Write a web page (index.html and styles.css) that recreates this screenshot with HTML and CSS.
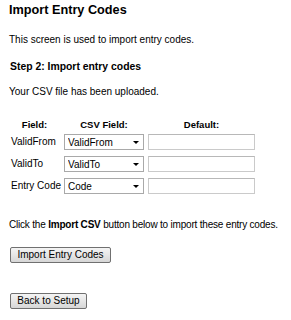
FILE: index.html
```html
<!DOCTYPE html>
<html lang="en">
<head>
    <meta charset="UTF-8">
    <meta name="viewport" content="width=device-width, initial-scale=1.0">
    <title>Import Entry Codes</title>
    <link rel="stylesheet" href="styles.css">
</head>
<body>
    <div class="page">
        <h1 class="title">Import Entry Codes</h1>
        <p class="intro">This screen is used to import entry codes.</p>

        <h2 class="step">Step 2: Import entry codes</h2>
        <p class="uploaded">Your CSV file has been uploaded.</p>

        <div class="mapping">
            <div class="head">Field:</div>
            <div class="head">CSV Field:</div>
            <div class="head">Default:</div>

            <div class="label">ValidFrom</div>
            <div class="select-wrap">
                <select>
                    <option>ValidFrom</option>
                    <option>ValidTo</option>
                    <option>Code</option>
                </select>
            </div>
            <input type="text" class="default">

            <div class="label">ValidTo</div>
            <div class="select-wrap">
                <select>
                    <option>ValidTo</option>
                    <option>ValidFrom</option>
                    <option>Code</option>
                </select>
            </div>
            <input type="text" class="default">

            <div class="label">Entry Code</div>
            <div class="select-wrap">
                <select>
                    <option>Code</option>
                    <option>ValidFrom</option>
                    <option>ValidTo</option>
                </select>
            </div>
            <input type="text" class="default">
        </div>

        <p class="hint">Click the <b>Import CSV</b> button below to import these entry codes.</p>

        <button type="button" class="btn btn-import">Import Entry Codes</button>
        <button type="button" class="btn btn-back">Back to Setup</button>
    </div>
</body>
</html>
```

FILE: styles.css
```css
body {
    margin: 0;
    background: #fff;
    color: #000;
    font-family: 'Liberation Sans', Arial, sans-serif;
    font-size: 10px;
    line-height: 12px;
}
.page {
    padding: 0 9px;
}
.title {
    margin: 3px 0 0;
    font-size: 12.7px;
    line-height: 15px;
    font-weight: bold;
}
.intro {
    margin: 16px 0 0;
}
.step {
    margin: 15px 0 0;
    padding-left: 1px;
    font-size: 10.4px;
    line-height: 12px;
    font-weight: bold;
}
.uploaded {
    margin: 13px 0 0;
}

/* field mapping table */
.mapping {
    display: grid;
    grid-template-columns: 51px 80px 107px;
    column-gap: 4px;
    row-gap: 6px;
    margin-top: 23px;
}
.mapping .head {
    font-size: 9.5px;
    line-height: 7px;
    font-weight: bold;
    text-align: center;
}
.mapping .label {
    padding-left: 2px;
    line-height: 16px;
    white-space: nowrap;
}
.select-wrap {
    position: relative;
    height: 16px;
}
.select-wrap select {
    -webkit-appearance: none;
    appearance: none;
    box-sizing: border-box;
    width: 80px;
    height: 16px;
    margin: 0;
    padding: 0 0 0 3px;
    border: 1px solid #a9a9a9;
    border-radius: 0;
    background: #fff;
    color: #000;
    font-family: 'Liberation Sans', Arial, sans-serif;
    font-size: 10px;
}
.select-wrap::after {
    content: '';
    position: absolute;
    right: 5px;
    top: 7px;
    border-left: 3px solid transparent;
    border-right: 3px solid transparent;
    border-top: 3px solid #000;
    pointer-events: none;
}
.default {
    box-sizing: border-box;
    width: 107px;
    height: 16px;
    margin: 0;
    padding: 0 2px;
    border: 1px solid #cacaca;
    border-top-color: #b8b8b8;
    background: #fff;
    font-family: 'Liberation Sans', Arial, sans-serif;
    font-size: 10px;
}

.hint {
    margin: 25px 0 0;
    white-space: nowrap;
    letter-spacing: -0.2px;
}

/* buttons */
.btn {
    display: block;
    box-sizing: border-box;
    height: 16px;
    margin-left: 1px;
    padding: 0;
    border: 1px solid #707070;
    border-radius: 2px;
    background: linear-gradient(#f4f4f4, #e6e6e6 50%, #d6d6d6);
    color: #000;
    font-family: 'Liberation Sans', Arial, sans-serif;
    font-size: 10px;
    line-height: 14px;
    text-align: center;
    cursor: pointer;
}
.btn-import {
    width: 101px;
    margin-top: 16px;
}
.btn-back {
    width: 77px;
    margin-top: 30px;
}
```
